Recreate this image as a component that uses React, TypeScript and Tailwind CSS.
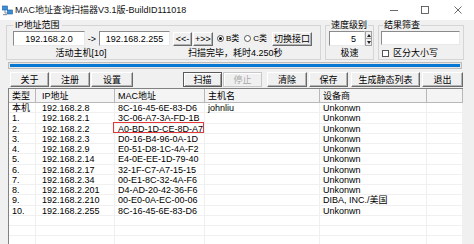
import React from 'react';

const rows = [
  ['本机', '192.168.2.8', '8C-16-45-6E-83-D6', 'johnliu', 'Unkonwn'],
  ['1.', '192.168.2.1', '3C-06-A7-3A-FD-1B', '', 'Unkonwn'],
  ['2.', '192.168.2.2', 'A0-BD-1D-CE-8D-A7', '', 'Unkonwn'],
  ['3.', '192.168.2.3', 'D0-16-B4-96-0A-1D', '', 'Unkonwn'],
  ['4.', '192.168.2.9', 'E0-51-D8-1C-4A-F2', '', 'Unkonwn'],
  ['5.', '192.168.2.14', 'E4-0E-EE-1D-79-40', '', 'Unkonwn'],
  ['6.', '192.168.2.17', '32-1F-C7-A7-15-15', '', 'Unkonwn'],
  ['7.', '192.168.2.34', '00-E1-8C-32-4A-F6', '', 'Unkonwn'],
  ['8.', '192.168.2.201', 'D4-AD-20-42-36-F6', '', 'Unkonwn'],
  ['9.', '192.168.2.210', '00-E0-0A-EC-00-06', '', 'DIBA, INC./美国'],
  ['10.', '192.168.2.255', '8C-16-45-6E-83-D6', '', 'Unkonwn'],
  ['', '', '', '', ''],
  ['', '', '', '', ''],
  ['', '', '', '', ''],
];

const cols = ['w-[27px] pl-[3px]', 'w-[79px] pl-[6px]', 'w-[90px] pl-[3px]', 'w-[115px] pl-[3px]', 'w-[107px] pl-[3px]', 'flex-1'];

// classic raised button
const Btn = ({ children, className = '', disabled = false, def = false }: { children?: React.ReactNode; className?: string; disabled?: boolean; def?: boolean }) => (
  <div
    className={`h-full flex items-center justify-center border whitespace-nowrap ${
      def
        ? 'border-[#5a5a5a] shadow-[inset_1px_1px_0_#fff,inset_-1px_-1px_0_#a0a0a0]'
        : disabled
        ? 'border-[#c8c8c8] text-[#a8a8a8] shadow-[inset_1px_1px_0_#fff]'
        : 'border-t-white border-l-white border-r-[#6a6a6a] border-b-[#6a6a6a] shadow-[inset_-1px_-1px_0_#b4b4b4]'
    } ${className}`}
  >
    {children}
  </div>
);

const Sunken = ({ className = '', children }: { className?: string; children?: React.ReactNode }) => (
  <div className={`shrink-0 bg-white border border-t-[#8a8a8a] border-l-[#8a8a8a] border-r-[#e8e8e8] border-b-[#e8e8e8] flex items-center whitespace-nowrap ${className}`}>
    {children}
  </div>
);

export default function App() {
  return (
    <div className="w-[474px] h-[244px] overflow-hidden bg-[#f0f0f0] text-black text-[9px] leading-[10px] font-['Liberation_Sans','Noto_Sans_CJK_SC',sans-serif]">
      {/* Title bar */}
      <div className="h-[20px] bg-white flex items-center">
        <svg width="11" height="11" viewBox="0 0 11 11" className="ml-[2px]">
          <rect x="0.5" y="1" width="5" height="4" fill="#3b8fd9" stroke="#1d5c9e" strokeWidth="0.6" />
          <rect x="5.5" y="5" width="5" height="4" fill="#3b8fd9" stroke="#1d5c9e" strokeWidth="0.6" />
          <path d="M3 5v3h2.5" stroke="#6b7785" strokeWidth="0.8" fill="none" />
          <rect x="1" y="9" width="4" height="1.2" fill="#8a96a3" />
        </svg>
        <span className="ml-[2px] text-[9px] text-[#111]">MAC地址查询扫描器V3.1版-BuildID111018</span>
        <svg width="8" height="8" viewBox="0 0 8 8" className="ml-auto">
          <path d="M0 4.5h8" stroke="#444" strokeWidth="0.8" />
        </svg>
        <svg width="8" height="8" viewBox="0 0 8 8" className="ml-[23px]">
          <rect x="0.5" y="0.5" width="7" height="7" stroke="#444" strokeWidth="0.8" fill="none" />
        </svg>
        <svg width="8" height="8" viewBox="0 0 8 8" className="ml-[25px] mr-[12px]">
          <path d="M0.5 0.5l7 7M7.5 0.5l-7 7" stroke="#444" strokeWidth="0.8" />
        </svg>
      </div>

      {/* Top groups */}
      <div className="flex">
        <fieldset className="shrink-0 ml-[6px] w-[315px] h-[40px] border border-[#d5d5d5]">
          <legend className="ml-[6px] px-[2px]">IP地址范围</legend>
          <div className="flex items-center h-[15px] mt-[1px] whitespace-nowrap">
            <Sunken className="ml-[6px] w-[72px] h-full justify-center">192.168.2.0</Sunken>
            <span className="shrink-0 w-[14px] text-center">-&gt;</span>
            <Sunken className="w-[71px] h-full justify-center">192.168.2.255</Sunken>
            <div className="shrink-0 ml-[3px] w-[19px] h-[14px]"><Btn>&lt;&lt;-</Btn></div>
            <div className="shrink-0 ml-[1px] w-[20px] h-[14px]"><Btn>+&gt;&gt;</Btn></div>
            <span className="shrink-0 ml-[4px] w-[7px] h-[7px] rounded-full border border-[#555] bg-white flex items-center justify-center">
              <span className="w-[3px] h-[3px] rounded-full bg-black" />
            </span>
            <span className="shrink-0 ml-[2px] text-[8px]">B类</span>
            <span className="shrink-0 ml-[5px] w-[7px] h-[7px] rounded-full border border-[#555] bg-white" />
            <span className="shrink-0 ml-[2px] text-[8px]">C类</span>
            <div className="shrink-0 ml-[5px] w-[40px] h-[14px]"><Btn>切换接口</Btn></div>
          </div>
          <div className="flex mt-[2px] h-[10px]">
            <span className="shrink-0 ml-[30px] w-[88px] text-center whitespace-nowrap">活动主机[10]</span>
            <span className="shrink-0 ml-[63px] w-[88px] text-center whitespace-nowrap">扫描完毕，耗时4.250秒</span>
          </div>
        </fieldset>

        <fieldset className="shrink-0 ml-[4px] w-[49px] h-[40px] border border-[#d5d5d5]">
          <legend className="ml-[4px] px-[1px]">速度级别</legend>
          <div className="flex ml-[3px] mt-[1px] w-[43px] h-[15px]">
            <Sunken className="flex-1 shrink h-full justify-end pr-[8px]">5</Sunken>
            <div className="w-[7px] h-full flex flex-col border border-[#a0a0a0] bg-[#f0f0f0]">
              <div className="flex-1 flex items-center justify-center border-b border-[#a0a0a0]">
                <svg width="4" height="3" viewBox="0 0 4 3"><path d="M0 3L2 0L4 3z" fill="#222" /></svg>
              </div>
              <div className="flex-1 flex items-center justify-center">
                <svg width="4" height="3" viewBox="0 0 4 3"><path d="M0 0L2 3L4 0z" fill="#222" /></svg>
              </div>
            </div>
          </div>
          <div className="mt-[2px] text-center">极速</div>
        </fieldset>

        <fieldset className="shrink-0 ml-[4px] w-[86px] h-[40px] border border-[#d5d5d5]">
          <legend className="ml-[4px] px-[1px]">结果筛查</legend>
          <Sunken className="ml-[2px] mt-[1px] w-[79px] h-[14px]" />
          <div className="flex items-center mt-[3px]">
            <span className="ml-[3px] w-[7px] h-[7px] border border-[#555] bg-white" />
            <span className="ml-[4px]">区分大小写</span>
          </div>
        </fieldset>
      </div>

      {/* Progress bar */}
      <div className="mt-[2px] ml-[8px] w-[454px] h-[7px] border border-[#bcbcbc] bg-[#e6e6e6] p-[1px]">
        <div className="h-full w-full bg-[#0678d4]" />
      </div>

      {/* Buttons */}
      <div className="flex mt-[3px] h-[15px]">
        <div className="ml-[10px] w-[39px]"><Btn>关于</Btn></div>
        <div className="ml-[1px] w-[40px]"><Btn>注册</Btn></div>
        <div className="ml-[1px] w-[42px]"><Btn>设置</Btn></div>
        <div className="ml-[50px] w-[39px]"><Btn def>扫描</Btn></div>
        <div className="ml-[1px] w-[39px]"><Btn disabled>停止</Btn></div>
        <div className="ml-[5px] w-[40px]"><Btn>清除</Btn></div>
        <div className="ml-[2px] w-[39px]"><Btn>保存</Btn></div>
        <div className="ml-[3px] w-[69px]"><Btn>生成静态列表</Btn></div>
        <div className="ml-[2px] w-[41px]"><Btn>退出</Btn></div>
      </div>

      {/* List */}
      <div className="mt-[1px] ml-[8px] w-[455px] h-[200px] bg-white border-l border-t border-[#828282]">
        <div className="flex h-[14px] bg-[#f4f4f4] border-b border-[#b8b8b8]">
          {['类型', 'IP地址', 'MAC地址', '主机名', '设备商', ''].map((h, i) => (
            <div key={i} className={`${cols[i]} flex items-center border-r border-[#b8b8b8] whitespace-nowrap`}>
              {h}
            </div>
          ))}
        </div>
        {rows.map((r, ri) => (
          <div key={ri} className="flex h-[10.25px] leading-[10px] border-b border-[#f0f0f0]">
            {[...r, ''].map((c, ci) => (
              <div key={ci} className={`${cols[ci]} relative border-r border-[#f0f0f0] whitespace-nowrap overflow-visible`}>
                {c}
                {ri === 2 && ci === 2 && (
                  <span className="absolute -left-[2px] -top-[1.5px] right-0 bottom-0 border-[1.5px] border-[#e23a3a]" />
                )}
              </div>
            ))}
          </div>
        ))}
      </div>
    </div>
  );
}
